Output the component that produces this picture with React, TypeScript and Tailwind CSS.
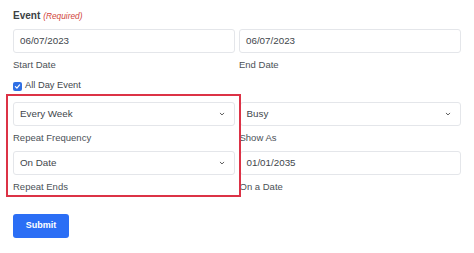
import React from 'react';

const font = { fontFamily: '"Liberation Sans", Arial, sans-serif' };

const Chevron = () => (
  <svg width="8" height="8" viewBox="0 0 10 10" className="text-[#555]">
    <path d="M2.8 4 5 6.2 7.2 4" fill="none" stroke="currentColor" strokeWidth="1.2" strokeLinecap="round" strokeLinejoin="round" />
  </svg>
);

const Field: React.FC<{ value: string; label: string; select?: boolean }> = ({ value, label, select }) => (
  <div className="flex-1 flex flex-col">
    <div className="h-[24px] border border-[#e4e6ea] rounded-[3px] bg-white flex items-center pl-[6px] pr-[8px] justify-between">
      <span className="text-[9.8px] text-[#41464c]">{value}</span>
      {select && <Chevron />}
    </div>
    <div className="text-[9.5px] text-[#4b5157] leading-[15px] mt-[4px] mb-[6px]">{label}</div>
  </div>
);

export default function App() {
  return (
    <div className="w-[474px] h-[253px] bg-white relative pl-[13px] pr-[13px] pt-[9px]" style={font}>
      <div className="flex items-baseline gap-[3px] leading-[14px] mb-[6px]">
        <span className="text-[10px] font-bold text-[#3b3f44]">Event</span>
        <span className="text-[8.3px] italic text-[#d0453a]">(Required)</span>
      </div>

      <div className="flex gap-[4px]">
        <Field value="06/07/2023" label="Start Date" />
        <Field value="06/07/2023" label="End Date" />
      </div>

      <div className="flex items-center gap-[3px] h-[16px] mb-[8px]">
        <span className="w-[9px] h-[9px] rounded-[2px] bg-[#2f6fe4] flex items-center justify-center">
          <svg width="7" height="7" viewBox="0 0 10 10">
            <path d="M2 5.2 4.2 7.3 8 2.8" fill="none" stroke="white" strokeWidth="1.8" strokeLinecap="round" strokeLinejoin="round" />
          </svg>
        </span>
        <span className="text-[9.3px] text-[#41464c]">All Day Event</span>
      </div>

      <div className="relative">
        <div className="flex gap-[5px]">
          <Field value="Every Week" label="Repeat Frequency" select />
          <Field value="Busy" label="Show As" select />
        </div>
        <div className="flex gap-[5px]">
          <Field value="On Date" label="Repeat Ends" select />
          <Field value="01/01/2035" label="On a Date" />
        </div>
        <div className="absolute left-[-7px] top-[-8px] w-[235px] h-[103px] border-2 border-[#dc3246] pointer-events-none" />
      </div>

      <button className="mt-[14px] h-[24px] w-[56px] rounded-[3px] bg-[#2b6ef5] text-white text-[9px] font-bold">
        Submit
      </button>
    </div>
  );
}
